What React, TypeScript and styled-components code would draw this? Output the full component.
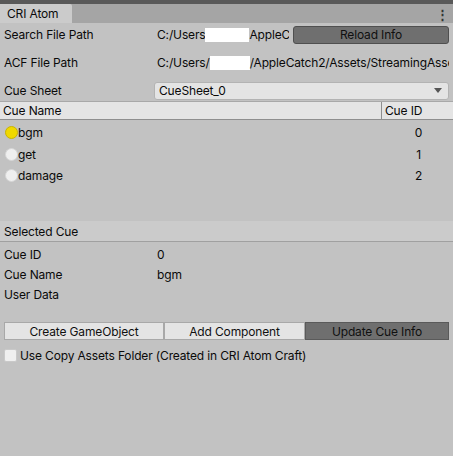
import React from "react";
import styled, { createGlobalStyle } from "styled-components";

const GlobalStyle = createGlobalStyle`
  html, body {
    margin: 0;
    padding: 0;
    background: #c2c2c2;
  }
  body {
    font-family: Inter, "Noto Sans", sans-serif;
    font-size: 12px;
    letter-spacing: -0.15px;
    color: #0a0a0a;
  }
`;

const Window = styled.div`
  width: 453px;
  height: 456px;
  display: flex;
  flex-direction: column;
  background: #c2c2c2;
  overflow: hidden;
`;

const TopStrip = styled.div`
  height: 4px;
  background: #595959;
`;

const TabBar = styled.div`
  height: 19px;
  display: flex;
  align-items: stretch;
  justify-content: space-between;
  background: #a5a5a5;
`;

const Tab = styled.div`
  width: 72px;
  display: flex;
  align-items: center;
  padding-left: 7px;
  box-sizing: border-box;
  background: #cbcbcb;
  border-top-right-radius: 2px;
`;

const Kebab = styled.div`
  width: 14px;
  display: flex;
  align-items: center;
  justify-content: center;
  color: #333;
  font-size: 13px;
  font-weight: 700;
  padding-right: 4px;
`;

const Fields = styled.div`
  display: flex;
  flex-direction: column;
  padding: 1px 4px 0 4px;
`;

const FieldRow = styled.div<{ $h: number }>`
  height: ${({ $h }) => $h}px;
  display: flex;
  align-items: center;
`;

const Label = styled.div`
  width: 153px;
  flex-shrink: 0;
`;

const Value = styled.div`
  flex: 1;
  min-width: 0;
  display: flex;
  align-items: center;
  white-space: nowrap;
  overflow: hidden;
`;

const Clip = styled.div`
  flex: 1;
  min-width: 0;
  display: flex;
  align-items: center;
  overflow: hidden;
  white-space: nowrap;
`;

const Redacted = styled.span<{ $w: number }>`
  display: inline-block;
  width: ${({ $w }) => $w}px;
  height: 14px;
  background: #ffffff;
  flex-shrink: 0;
`;

const DarkButton = styled.div`
  width: 156px;
  flex-shrink: 0;
  margin-left: 4px;
  height: 18px;
  display: flex;
  align-items: center;
  justify-content: center;
  background: #6f6f6f;
  border: 1px solid #4f4f4f;
  border-radius: 3px;
  box-sizing: border-box;
  color: #101010;
`;

const Dropdown = styled.div`
  flex: 1;
  margin-left: -3px;
  height: 18px;
  display: flex;
  align-items: center;
  justify-content: space-between;
  padding: 0 6px 0 4px;
  box-sizing: border-box;
  background: #e4e4e4;
  border: 1px solid #b3b3b3;
  border-radius: 3px;
`;

const Caret = styled.div`
  width: 0;
  height: 0;
  border-left: 4px solid transparent;
  border-right: 4px solid transparent;
  border-top: 5px solid #555;
`;

const Table = styled.div`
  height: 120px;
  display: flex;
  flex-direction: column;
`;

const TableHeader = styled.div`
  height: 19px;
  box-sizing: border-box;
  display: grid;
  grid-template-columns: 381px 1fr;
  background: #e4e4e4;
  border-top: 1px solid #a8a8a8;
  border-bottom: 1px solid #8e8e8e;
`;

const HeaderCell = styled.div<{ $divider?: boolean }>`
  display: flex;
  align-items: center;
  padding-left: 3px;
  border-left: ${({ $divider }) => ($divider ? "1px solid #8e8e8e" : "none")};
`;

const TableBody = styled.div`
  display: flex;
  flex-direction: column;
  padding-top: 2px;
`;

const CueRow = styled.div`
  height: 21.5px;
  display: grid;
  grid-template-columns: 381px 1fr;
  align-items: center;
`;

const NameCell = styled.div`
  display: flex;
  align-items: center;
  padding-left: 5px;
`;

const Dot = styled.span<{ $on?: boolean }>`
  width: 13px;
  height: 13px;
  border-radius: 50%;
  box-sizing: border-box;
  background: ${({ $on }) => ($on ? "#f0d800" : "#efefef")};
  border: 1px solid ${({ $on }) => ($on ? "#c9b400" : "#d6d6d6")};
  flex-shrink: 0;
`;

const IdCell = styled.div`
  text-align: center;
  padding-left: 3px;
`;

const SectionHeader = styled.div`
  height: 21px;
  box-sizing: border-box;
  display: flex;
  align-items: center;
  padding-left: 4px;
  background: #cbcbcb;
  border-bottom: 1px solid #a0a0a0;
`;

const Info = styled.div`
  display: flex;
  flex-direction: column;
  padding: 2px 4px 0 4px;
`;

const ButtonBar = styled.div`
  margin: 18px 4px 0 4px;
  height: 18px;
  display: grid;
  grid-template-columns: 160px 141px 1fr;
`;

const BarButton = styled.div<{ $dark?: boolean }>`
  display: flex;
  align-items: center;
  justify-content: center;
  box-sizing: border-box;
  background: ${({ $dark }) => ($dark ? "#6f6f6f" : "#e4e4e4")};
  border: 1px solid ${({ $dark }) => ($dark ? "#5a5a5a" : "#a8a8a8")};
  color: #101010;
`;

const CheckRow = styled.div`
  margin: 8px 4px 0 4px;
  display: flex;
  align-items: center;
  gap: 3px;
`;

const CheckBox = styled.span`
  width: 13px;
  height: 13px;
  box-sizing: border-box;
  background: #efefef;
  border: 1px solid #c9c9c9;
  border-radius: 2px;
`;

const cues = [
  { name: "bgm", id: 0, on: true },
  { name: "get", id: 1 },
  { name: "damage", id: 2 },
];

const App = () => {
  return (
    <Window>
      <GlobalStyle />
      <TopStrip />
      <TabBar>
        <Tab>CRI Atom</Tab>
        <Kebab>⋮</Kebab>
      </TabBar>
      <Fields>
        <FieldRow $h={21}>
          <Label>Search File Path</Label>
          <Value>
            <Clip>
              C:/Users
              <Redacted $w={44} />
              AppleC
            </Clip>
            <DarkButton>Reload Info</DarkButton>
          </Value>
        </FieldRow>
        <FieldRow $h={35}>
          <Label>ACF File Path</Label>
          <Value>
            C:/Users/
            <Redacted $w={40} />
            /AppleCatch2/Assets/StreamingAssets
          </Value>
        </FieldRow>
        <FieldRow $h={21}>
          <Label>Cue Sheet</Label>
          <Dropdown>
            CueSheet_0
            <Caret />
          </Dropdown>
        </FieldRow>
      </Fields>
      <Table>
        <TableHeader>
          <HeaderCell>Cue Name</HeaderCell>
          <HeaderCell $divider>Cue ID</HeaderCell>
        </TableHeader>
        <TableBody>
          {cues.map((c) => (
            <CueRow key={c.name}>
              <NameCell>
                <Dot $on={c.on} />
                {c.name}
              </NameCell>
              <IdCell>{c.id}</IdCell>
            </CueRow>
          ))}
        </TableBody>
      </Table>
      <SectionHeader>Selected Cue</SectionHeader>
      <Info>
        <FieldRow $h={20}>
          <Label>Cue ID</Label>
          <Value>0</Value>
        </FieldRow>
        <FieldRow $h={20}>
          <Label>Cue Name</Label>
          <Value>bgm</Value>
        </FieldRow>
        <FieldRow $h={20}>
          <Label>User Data</Label>
          <Value />
        </FieldRow>
      </Info>
      <ButtonBar>
        <BarButton>Create GameObject</BarButton>
        <BarButton>Add Component</BarButton>
        <BarButton $dark>Update Cue Info</BarButton>
      </ButtonBar>
      <CheckRow>
        <CheckBox />
        Use Copy Assets Folder (Created in CRI Atom Craft)
      </CheckRow>
    </Window>
  );
};

export default App;
